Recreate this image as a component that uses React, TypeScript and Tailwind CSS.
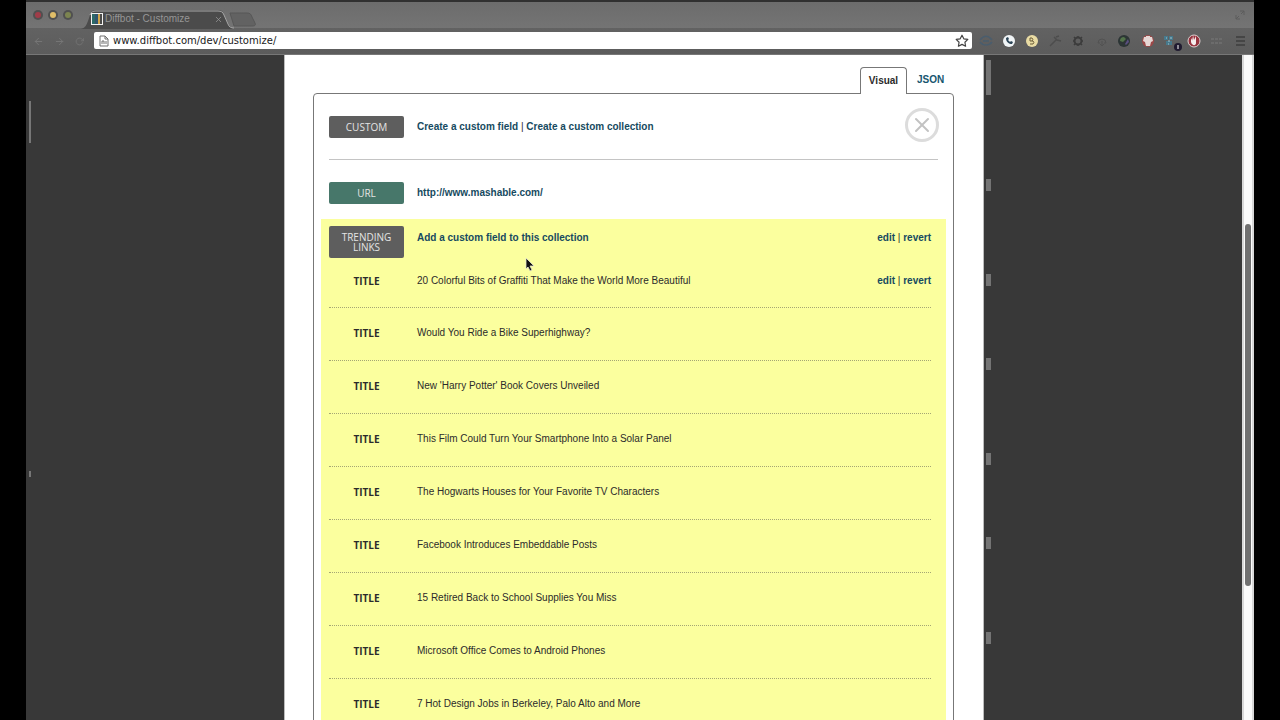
import React from 'react';
import { FiArrowLeft, FiArrowRight, FiRotateCw, FiStar, FiX } from 'react-icons/fi';

const links = [
  '20 Colorful Bits of Graffiti That Make the World More Beautiful',
  'Would You Ride a Bike Superhighway?',
  "New 'Harry Potter' Book Covers Unveiled",
  'This Film Could Turn Your Smartphone Into a Solar Panel',
  'The Hogwarts Houses for Your Favorite TV Characters',
  'Facebook Introduces Embeddable Posts',
  '15 Retired Back to School Supplies You Miss',
  'Microsoft Office Comes to Android Phones',
  '7 Hot Design Jobs in Berkeley, Palo Alto and More',
];

const linkClass = 'font-bold text-[#164a60] hover:underline';

const EditLinks = () => (
  <span className="whitespace-nowrap">
    <a href="#edit" className={linkClass}>
      edit
    </a>{' '}
    |{' '}
    <a href="#revert" className={linkClass}>
      revert
    </a>
  </span>
);

const WindowLights = () => (
  <div className="flex gap-[5px] pt-[8px] pl-[7px]">
    {['bg-[#a03c48]', 'bg-[#e0be68]', 'bg-[#7c8450]'].map((color) => (
      <span
        key={color}
        className="flex h-[10px] w-[10px] items-center justify-center rounded-full bg-[#505050]"
      >
        <span className={`h-[6px] w-[6px] rounded-full ${color}`} />
      </span>
    ))}
  </div>
);

const TabStrip = () => (
  <div className="relative flex h-7 items-start border-t-2 border-[#303030] bg-linear-to-b from-[#6c6c6c] to-[#747474]">
    <WindowLights />
    <svg
      className="absolute top-[8px] left-[52px]"
      width="184"
      height="19"
      viewBox="0 0 184 19"
      fill="none"
    >
      <path d="M152 3h17c3 0 4 1 5 4l3 6c1 2 0 3-3 3h-18z" fill="#626262" stroke="#575757" />
      <path d="M3 19c4-1 5-3 7-8l2-6c1-4 3-5 6-5h122c3 0 5 1 6 5l4 8c2 4 4 6 8 6z" fill="#4b4b4b" />
      <path d="M12 5c1-3 3-4 6-4h122c3 0 5 1 6 4l4 9c1 3 3 4 6 4" stroke="#a8a8a8" />
      <rect x="13" y="3" width="12" height="12" fill="#f2f2f2" />
      <rect x="14" y="4" width="3" height="10" fill="#2d6a68" />
      <rect x="17" y="4" width="3" height="10" fill="#31566f" />
      <rect x="20" y="4" width="2" height="10" fill="#d2a64b" />
      <rect x="22" y="4" width="2" height="10" fill="#4a4a48" />
    </svg>
    <div className="absolute top-[11px] left-[79px] flex w-[118px] items-center justify-between text-[10px] leading-[12px] text-[#969696]">
      <span>Diffbot - Customize</span>
      <FiX size={9} />
    </div>
    <svg
      className="ml-auto mt-[8px] mr-[9px]"
      width="10"
      height="10"
      viewBox="0 0 10 10"
      fill="none"
      stroke="#5c5c5c"
    >
      <path d="M5 1h4v4M9 1L6 4M1 5v4h4M1 9l3-3" />
    </svg>
  </div>
);

const Extensions = () => (
  <svg width="278" height="20" viewBox="0 0 278 20" fill="none">
    <path d="M4 9c4-5 8-5 12 0M4 11c3 4 9 4 12 0M7 10h6" stroke="#4a5d6d" strokeWidth="1.5" />
    <circle cx="33" cy="10" r="6" fill="#f0f4f6" />
    <path d="M30 7c0 4 3 6 6 6l1-2-2-1-1 1-2-2 1-1-1-2z" fill="#2c4557" />
    <circle cx="56" cy="10" r="6" fill="#e9dca4" />
    <path d="M54 7h2a2 2 0 010 3h-2zM56 10h1a2 2 0 010 3h-3" stroke="#6b5c38" />
    <path d="M74 15l6-6m-2-3l3 3 4 1m-5-4l3-1" stroke="#4d4d4d" strokeWidth="1.5" />
    <circle cx="102" cy="10" r="3.5" stroke="#3c3c3c" strokeWidth="2" />
    <path
      d="M102 5v1m0 8v1m-5-5h1m8 0h1m-9-4l1 1m6 6l1 1m0-8l-1 1m-6 6l-1 1"
      stroke="#3c3c3c"
      strokeWidth="1.5"
    />
    <path d="M122 12a4 4 0 118 0h-2m-4 0h-2m4-2v5m-2-2l2 2 2-2" stroke="#525252" />
    <circle cx="148" cy="10" r="6" fill="#2c3535" />
    <path d="M144 10a4 4 0 014-4l2 2-3 3z" fill="#52734a" />
    <path d="M149 13l3-5 1 3-3 3z" fill="#5a4f80" />
    <circle cx="172" cy="10" r="6" fill="#9b4848" />
    <path d="M168 6h2v-1h4v1h2l1 4-2 1-1 4h-4l-1-4-2-1z" fill="#e6d7d5" />
    <path d="M188 5h4v4h-4zM193 5h4v4h-4zM190 10h6v4h-6z" fill="#47798c" />
    <path d="M190 7h1m3 0h2m-4 3h2m-2 3h1" stroke="#a3c6d0" />
    <circle cx="202" cy="16" r="4" fill="#201b30" />
    <path d="M202 14v4" stroke="#fff" />
    <circle cx="218" cy="10" r="6" fill="#98343f" stroke="#ddd0d0" />
    <path d="M215 9l1-2v3l1-5v4l1-5v5l2-4v7c0 3-4 3-5-1z" fill="#f5eeee" />
    <path d="M235 8h12M235 12h12" stroke="#6c6c6c" strokeWidth="2" strokeDasharray="3 1" />
    <path d="M260 6h9M260 10h9M260 14h9" stroke="#454545" strokeWidth="2" />
  </svg>
);

const Toolbar = () => (
  <div className="flex h-[27px] items-center border-b border-[#777777] bg-linear-to-b from-[#626262] to-[#5c5c5c]">
    <div className="flex w-[68px] items-center gap-[10px] pl-[7px] text-[#777777]">
      <button aria-label="Back">
        <FiArrowLeft size={11} />
      </button>
      <button aria-label="Forward">
        <FiArrowRight size={11} />
      </button>
      <button aria-label="Reload">
        <FiRotateCw size={9} />
      </button>
    </div>
    <div className="mb-px flex h-[17px] flex-1 items-center rounded-xs bg-white pr-[3px] pl-[5px]">
      <svg width="10" height="12" viewBox="0 0 10 12" fill="none" stroke="#707070">
        <path d="M1 1h5l3 3v7H1zM6 1v3h3M3 9V6h2v3m2-3v3" />
      </svg>
      <input
        aria-label="Address"
        defaultValue="www.diffbot.com/dev/customize/"
        className="ml-[4px] h-4 flex-1 bg-transparent font-['DejaVu_Sans',sans-serif] text-[10px] text-[#202020] outline-none"
      />
      <button aria-label="Bookmark">
        <FiStar size={14} className="text-[#404040]" />
      </button>
    </div>
    <div className="pl-[4px]">
      <Extensions />
    </div>
  </div>
);

const SideMarks = () => (
  <div className="flex flex-1 flex-col pt-[5px] pr-px pl-[2px]">
    <span className="mb-[84px] h-[35px] w-[5px] bg-[#747474]" />
    {[0, 1, 2].map((pair) => (
      <React.Fragment key={pair}>
        <span className="mb-[83px] h-[12px] w-[5px] bg-[#747474]" />
        <span className="mb-[72px] h-[12px] w-[5px] bg-[#747474]" />
      </React.Fragment>
    ))}
  </div>
);

const Badge = ({ children, green }: { children: React.ReactNode; green?: boolean }) => (
  <div
    className={`flex min-h-[22px] w-[75px] items-center justify-center rounded-xs px-2 py-[6px] text-center font-['Open_Sans',sans-serif] text-[10px] leading-[10px] text-[#e4e4e4] ${
      green ? 'bg-[#47776a]' : 'bg-[#5e5e5e]'
    }`}
  >
    {children}
  </div>
);

const Cursor = () => (
  <svg className="absolute top-[38px] left-[196px]" width="10" height="15" viewBox="0 0 10 15">
    <path d="M1 1v11l2-2 2 4 2-1-2-4h4z" fill="#111" stroke="#e8e8d0" strokeWidth="0.8" />
  </svg>
);

const App = () => (
  <div className="h-screen overflow-hidden bg-black px-[26px] font-['Liberation_Sans',Arial,sans-serif] text-[10px] leading-[14px] text-[#2b2b2b]">
    <TabStrip />
    <Toolbar />
    <div className="flex h-full bg-[#383838]">
      <main className="flex flex-1">
        <div className="flex flex-1 flex-col pt-[46px] pl-[3px]">
          <span className="h-[42px] w-[2px] bg-[#777777]" />
          <span className="mt-[328px] h-[6px] w-[2px] bg-[#777777]" />
        </div>
        <div className="w-[700px] border-x border-[#bcbcbc] bg-white pt-[12px] pr-[29px] pl-[28px]">
          <div className="flex items-end justify-end pr-[10px] font-bold" role="tablist">
            <button
              role="tab"
              aria-selected
              className="relative -mb-px h-[27px] w-[47px] rounded-t-sm border border-b-0 border-[#777777] bg-white"
            >
              Visual
            </button>
            <button
              role="tab"
              aria-selected={false}
              className="h-[26px] w-[37px] pl-[10px] text-[#16566f]"
            >
              JSON
            </button>
          </div>
          <div className="rounded-t-sm border border-[#777777] px-[7px]">
            <div className="mx-2 flex h-[66px] items-start border-b border-[#c4c4c4] pt-[14px]">
              <div className="mt-[8px] flex flex-1 items-center gap-[13px]">
                <Badge>CUSTOM</Badge>
                <span>
                  <a href="#field" className={linkClass}>
                    Create a custom field
                  </a>{' '}
                  |{' '}
                  <a href="#collection" className={linkClass}>
                    Create a custom collection
                  </a>
                </span>
              </div>
              <button
                aria-label="Close"
                className="-mr-[1px] flex h-[34px] w-[34px] items-center justify-center rounded-full border-3 border-[#dcdcdc] text-[#c2c2c2]"
              >
                <FiX size={24} />
              </button>
            </div>
            <div className="mx-2 flex items-center gap-[13px] pt-[22px] pb-[15px]">
              <Badge green>URL</Badge>
              <a href="#url" className={linkClass}>
                http://www.mashable.com/
              </a>
            </div>
            <section className="bg-[#fbff9e] pr-[15px] pl-[8px]">
              <div className="relative flex items-start gap-[13px] pt-[7px]">
                <Badge>TRENDING LINKS</Badge>
                <a href="#add" className={`mt-[5px] flex-1 ${linkClass}`}>
                  Add a custom field to this collection
                </a>
                <span className="mt-[5px]">
                  <EditLinks />
                </span>
                <Cursor />
              </div>
              {links.map((title, index) => (
                <div
                  key={title}
                  className={`flex items-center gap-[13px] border-b border-dotted border-[#a4a674] ${
                    index === 0 ? 'h-[50px] pb-[4px]' : 'h-[53px] pb-[2px]'
                  }`}
                >
                  <span className="w-[75px] text-center font-['Open_Sans',sans-serif] font-bold">
                    TITLE
                  </span>
                  <span className="flex-1">{title}</span>
                  {index === 0 && <EditLinks />}
                </div>
              ))}
            </section>
          </div>
        </div>
        <SideMarks />
      </main>
      <div className="w-[12px] border-x-2 border-[#d8d8d8] bg-[#fafafa] pt-[169px]">
        <div className="mx-auto h-[362px] w-[6px] rounded-full bg-[#707070]" />
      </div>
    </div>
  </div>
);

export default App;
